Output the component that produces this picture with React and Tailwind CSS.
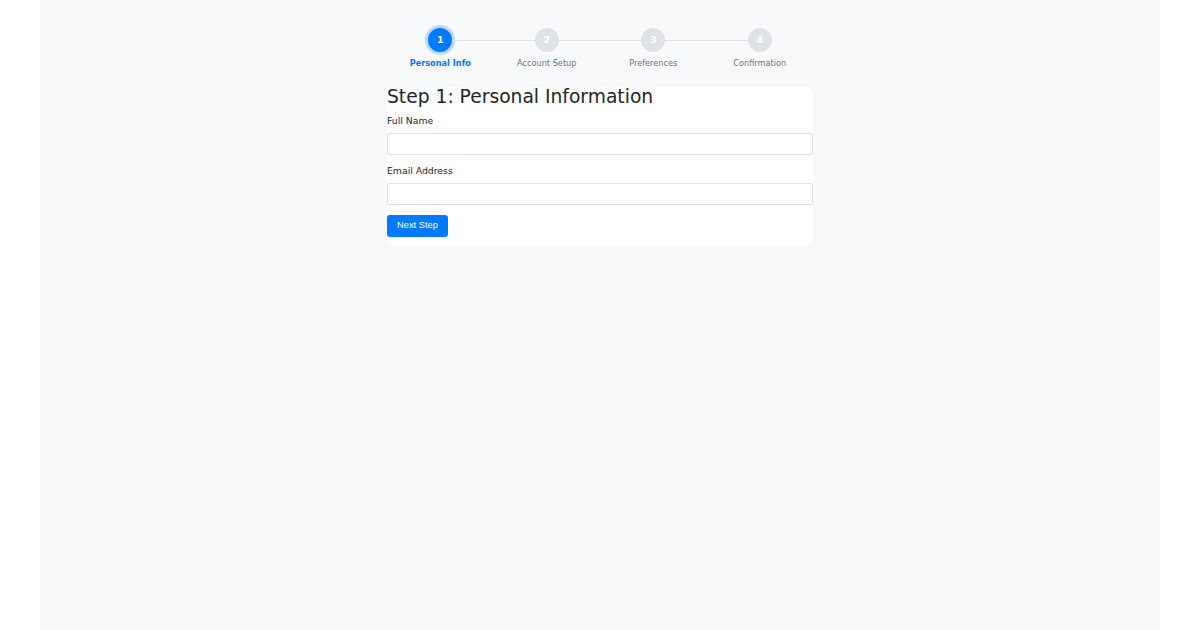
import React, { useState } from 'react';

const steps = ['Personal Info', 'Account Setup', 'Preferences', 'Confirmation'];

const Step = ({ index, label, active, first, last }) => (
    <div className="flex flex-1 flex-col items-center">
        <div className="flex w-full items-center">
            <div className={`h-px flex-1 ${first ? 'bg-transparent' : 'bg-[#dee2e6]'}`} />
            <div
                className={`flex h-6 w-6 items-center justify-center rounded-full text-[9.5px] font-bold text-white ${
                    active ? 'bg-[#007bff] ring-[3px] ring-[#007bff]/25' : 'bg-[#dee2e6]'
                }`}
            >
                {index + 1}
            </div>
            <div className={`h-px flex-1 ${last ? 'bg-transparent' : 'bg-[#dee2e6]'}`} />
        </div>
        <span className={`mt-[5px] text-[8.2px] leading-[12px] ${active ? 'font-bold text-[#007bff]' : 'text-[#6c757d]'}`}>
            {label}
        </span>
    </div>
);

const App = () => {
    const [current] = useState(0);

    return (
        <div className="min-h-screen bg-white font-['DejaVu_Sans',sans-serif]">
            <div className="mx-10 min-h-screen bg-[#f8f9fa] pt-7">
                <div className="mx-auto w-[426px]">
                    {/* Stepper */}
                    <div className="flex">
                        {steps.map((s, i) => (
                            <Step key={s} index={i} label={s} active={i === current} first={i === 0} last={i === steps.length - 1} />
                        ))}
                    </div>

                    {/* Form card */}
                    <div className="mt-[18px] rounded-lg bg-white pb-[9px]">
                        <h2 className="text-[18.7px] leading-[20px] text-[#212529]">Step 1: Personal Information</h2>
                        <label className="mt-[8px] block text-[9.3px] leading-[12px] text-[#212529]">Full Name</label>
                        <input className="mt-[6px] block h-[22px] w-full rounded-[2px] border border-[#e2e2e2] bg-white" />
                        <label className="mt-[10px] block text-[9.3px] leading-[12px] text-[#212529]">Email Address</label>
                        <input className="mt-[6px] block h-[22px] w-full rounded-[2px] border border-[#e2e2e2] bg-white" />
                        <button className="mt-[10px] h-[22px] rounded-[3px] bg-[#007bff] px-[10px] font-['Liberation_Sans',sans-serif] text-[9.3px] text-white">
                            Next Step
                        </button>
                    </div>
                </div>
            </div>
        </div>
    );
};

export default App;
